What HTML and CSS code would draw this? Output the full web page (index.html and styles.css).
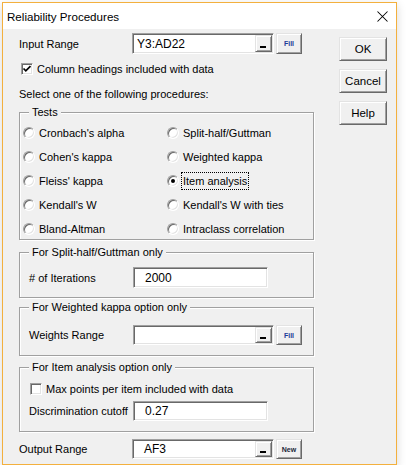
FILE: index.html
```html
<!DOCTYPE html>
<html lang="en">
<head>
<meta charset="utf-8">
<title>Reliability Procedures</title>
<link rel="stylesheet" href="styles.css">
</head>
<body>
<div class="window">
  <div class="titlebar">
    <span class="title">Reliability Procedures</span>
    <svg class="close" width="11" height="11" viewBox="0 0 11 11"><path d="M0.5 0.5L10.5 10.5M10.5 0.5L0.5 10.5" stroke="#000" stroke-width="1.05" fill="none"/></svg>
  </div>
  <div class="body">
    <div class="main">
      <div class="row row-input">
        <span class="lbl lbl-main">Input Range</span>
        <div class="refedit refedit-main"><span class="val val-tight">Y3:AD22</span><span class="collapse"><i></i></span></div>
        <button class="mini mini-blue">Fill</button>
      </div>
      <div class="row row-check">
        <span class="check"><svg width="10" height="10" viewBox="0 0 10 10"><path d="M1.5 4.5L3.8 6.8L8.5 2.1" stroke="#000" stroke-width="1.7" fill="none"/></svg></span>
        <span class="lbl">Column headings included with data</span>
      </div>
      <div class="row row-select"><span class="lbl">Select one of the following procedures:</span></div>

      <div class="group group-tests">
        <span class="legend">Tests</span>
        <div class="radios">
          <div class="opt"><span class="radio"></span><span class="opt-lbl">Cronbach's alpha</span></div>
          <div class="opt"><span class="radio"></span><span class="opt-lbl">Split-half/Guttman</span></div>
          <div class="opt"><span class="radio"></span><span class="opt-lbl">Cohen's kappa</span></div>
          <div class="opt"><span class="radio"></span><span class="opt-lbl">Weighted kappa</span></div>
          <div class="opt"><span class="radio"></span><span class="opt-lbl">Fleiss' kappa</span></div>
          <div class="opt"><span class="radio radio-on"></span><span class="opt-lbl opt-focus">Item analysis</span></div>
          <div class="opt"><span class="radio"></span><span class="opt-lbl">Kendall's W</span></div>
          <div class="opt"><span class="radio"></span><span class="opt-lbl">Kendall's W with ties</span></div>
          <div class="opt"><span class="radio"></span><span class="opt-lbl">Bland-Altman</span></div>
          <div class="opt"><span class="radio"></span><span class="opt-lbl">Intraclass correlation</span></div>
        </div>
      </div>

      <div class="group group-split">
        <span class="legend">For Split-half/Guttman only</span>
        <div class="row row-field row-field-21">
          <span class="lbl lbl-grp">&#35; of Iterations</span>
          <div class="textbox"><span class="val">2000</span></div>
        </div>
      </div>

      <div class="group group-weight">
        <span class="legend">For Weighted kappa option only</span>
        <div class="row row-field">
          <span class="lbl lbl-grp">Weights Range</span>
          <div class="refedit"><span class="val"></span><span class="collapse"><i></i></span></div>
          <button class="mini mini-blue">Fill</button>
        </div>
      </div>

      <div class="group group-item">
        <span class="legend">For Item analysis option only</span>
        <div class="row row-check row-check-grp">
          <span class="check"></span>
          <span class="lbl">Max points per item included with data</span>
        </div>
        <div class="row row-field row-disc">
          <span class="lbl lbl-grp">Discrimination cutoff</span>
          <div class="textbox"><span class="val">0.27</span></div>
        </div>
      </div>

      <div class="row row-output">
        <span class="lbl lbl-main">Output Range</span>
        <div class="refedit refedit-main"><span class="val">AF3</span><span class="collapse"><i></i></span></div>
        <button class="mini">New</button>
      </div>
    </div>

    <div class="buttons">
      <button class="btn">OK</button>
      <button class="btn">Cancel</button>
      <button class="btn">Help</button>
    </div>
  </div>
</div>
</body>
</html>
```
FILE: styles.css
```css
html, body {
  margin: 0;
  padding: 0;
  background: #ffffff;
}

body {
  font-family: "Liberation Sans", Arial, sans-serif;
  font-size: 11px;
  color: #000;
}

.window {
  margin: 2px 0 0 2px;
  width: 393px;
  height: 461px;
  border: 1px solid #f3b03e;
  background: #f0f0f0;
  box-shadow: 0 3px 9px rgba(0, 0, 0, 0.16);
  display: flex;
  flex-direction: column;
}

.titlebar {
  height: 26px;
  flex: none;
  background: #ffffff;
  display: flex;
  align-items: center;
  justify-content: space-between;
  padding: 0 8px 0 4px;
}

.title {
  font-size: 11.6px;
  line-height: 14px;
  color: #000;
  margin-top: 1px;
}

.close {
  display: block;
  margin-top: 1px;
}

.body {
  flex: 1;
  display: flex;
  padding: 0 9px 0 16px;
}

.main {
  width: 295px;
  padding-top: 4px;
  display: flex;
  flex-direction: column;
}

.buttons {
  margin-left: 25px;
  width: 48px;
  padding-top: 8px;
  display: flex;
  flex-direction: column;
  gap: 8px;
}

.btn {
  width: 48px;
  height: 24px;
  padding: 0;
  margin: 0;
  font-family: "Liberation Sans", Arial, sans-serif;
  font-size: 11.5px;
  font-weight: normal;
  color: #000;
  background: #f0f0f0;
  border: 1px solid;
  border-color: #e3e3e3 #696969 #696969 #e3e3e3;
  box-shadow: inset 1px 1px 0 #ffffff, inset -1px -1px 0 #a0a0a0;
}

.row {
  display: flex;
  align-items: center;
}

.lbl {
  line-height: 14px;
  white-space: nowrap;
}

.lbl-main {
  width: 113px;
  flex: none;
}

.lbl-grp {
  width: 104px;
  flex: none;
}

.row-input {
  height: 21px;
}

.row-check {
  height: 16px;
  margin-top: 7px;
  padding-left: 2px;
}

.row-select {
  height: 16px;
  margin-top: 9px;
}

/* sunken text boxes */
.refedit,
.textbox {
  box-sizing: border-box;
  height: 100%;
  background: #ffffff;
  border: 1px solid;
  border-color: #a0a0a0 #ffffff #ffffff #a0a0a0;
  box-shadow: inset 1px 1px 0 #696969, inset -1px -1px 0 #e3e3e3;
  display: flex;
  align-items: center;
}

.refedit {
  width: 141px;
  padding: 1px 1px 1px 0;
}

.refedit-main {
  width: 142px;
}

.textbox {
  width: 135px;
}

.val {
  flex: 1;
  font-size: 12px;
  line-height: 14px;
  padding-left: 11px;
  white-space: nowrap;
}

.val-tight {
  padding-left: 4px;
}

.collapse {
  box-sizing: border-box;
  width: 17px;
  height: 100%;
  flex: none;
  background: #f0f0f0;
  border: 1px solid;
  border-color: #e3e3e3 #696969 #696969 #e3e3e3;
  box-shadow: inset 1px 1px 0 #ffffff, inset -1px -1px 0 #a0a0a0;
  display: flex;
  align-items: flex-end;
  justify-content: center;
  padding-bottom: 3px;
}

.collapse i {
  display: block;
  width: 6px;
  height: 2px;
  background: #000;
  margin-left: -1px;
}

.mini {
  box-sizing: border-box;
  width: 26px;
  height: 100%;
  margin: 0 0 0 2px;
  padding: 0;
  font-family: "Liberation Sans", Arial, sans-serif;
  font-size: 7px;
  font-weight: bold;
  color: #1a1f3a;
  background: #f0f0f0;
  border: 1px solid;
  border-color: #e3e3e3 #696969 #696969 #e3e3e3;
  box-shadow: inset 1px 1px 0 #ffffff, inset -1px -1px 0 #a0a0a0;
}

.mini-blue {
  color: #1d3c98;
}

/* check box */
.check {
  box-sizing: border-box;
  width: 12px;
  height: 12px;
  flex: none;
  background: #ffffff;
  border: 1px solid;
  border-color: #a0a0a0 #ffffff #ffffff #a0a0a0;
  box-shadow: inset 1px 1px 0 #696969, inset -1px -1px 0 #e3e3e3;
  display: flex;
  align-items: center;
  justify-content: center;
  margin-right: 4px;
}

.check svg {
  display: block;
}

/* group boxes */
.group {
  box-sizing: border-box;
  position: relative;
  border: 1px solid #a0a0a0;
  box-shadow: inset 1px 1px 0 #ffffff, 1px 1px 0 #ffffff;
  width: 295px;
  flex: none;
}

.legend {
  position: absolute;
  top: -8px;
  left: 9px;
  padding: 0 3px;
  line-height: 14px;
  background: #f0f0f0;
  white-space: nowrap;
}

.group-tests {
  margin-top: 10px;
  padding: 12px 0 2px 3px;
}

.radios {
  display: grid;
  grid-template-columns: 144px 1fr;
  grid-auto-rows: 16px;
  row-gap: 8px;
}

.opt {
  display: flex;
  align-items: center;
  height: 16px;
}

.radio {
  position: relative;
  box-sizing: border-box;
  width: 12px;
  height: 12px;
  flex: none;
  border-radius: 50%;
  background: #ffffff;
  border: 1px solid;
  border-color: #a0a0a0 #ffffff #ffffff #a0a0a0;
  box-shadow: inset 1px 1px 0 #696969, inset -1px -1px 0 #e3e3e3;
}

.radio-on::after {
  content: "";
  position: absolute;
  left: 3px;
  top: 3px;
  width: 4px;
  height: 4px;
  border-radius: 50%;
  background: #000;
}

.opt-lbl {
  margin-left: 2px;
  padding: 1px;
  border: 1px dotted transparent;
  line-height: 14px;
  white-space: nowrap;
}

.opt-focus {
  border-color: #000;
}

.group-split {
  margin-top: 12px;
  padding: 14px 0 9px 9px;
}

.row-field {
  height: 20px;
}

.row-field-21 {
  height: 21px;
}

.group-weight {
  margin-top: 9px;
  padding: 17px 0 10px 9px;
}

.group-item {
  margin-top: 11px;
  padding: 13px 0 10px 9px;
}

.row-check-grp {
  margin-top: 0;
  padding-left: 1px;
}

.row-disc {
  margin-top: 4px;
}

.row-output {
  height: 20px;
  margin-top: 7px;
}
```
